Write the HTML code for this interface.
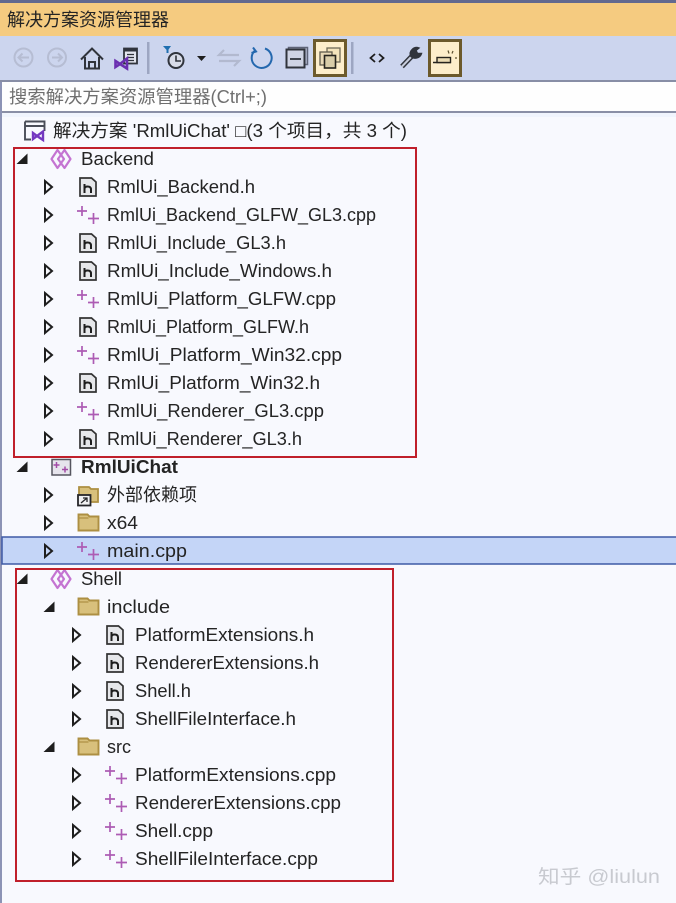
<!DOCTYPE html>
<html lang="zh"><head><meta charset="utf-8">
<style>
html,body{margin:0;padding:0;width:676px;height:903px;overflow:hidden;background:#f8f9fe}
svg{display:block}
text{font-family:"Liberation Sans","Noto Sans CJK SC",sans-serif;font-size:18px;fill:#242424}
</style></head><body>
<svg width="676" height="903" viewBox="0 0 676 903" xmlns="http://www.w3.org/2000/svg">
<defs>
<g id="r"><path d="M0 -6L7 0L0 6Z" fill="#f8f9fe" stroke="#1e1e1e" stroke-width="2"/></g>
<g id="d"><path d="M5.500 -5.500V5H-5.500Z" fill="#1e1e1e"/></g>
<g id="h"><path d="M-8 -9H3.500L8 -5V9H-8Z" fill="#e6e7ea" stroke="#333" stroke-width="1.700"/><path d="M-3.500 -3V6M-3.500 1.500Q-3 -.5 -.5 -.5Q3 -.5 3 2.500V6" fill="none" stroke="#1e1e1e" stroke-width="2"/></g>
<g id="c"><path d="M-11 -4H-1M-6 -9V1M0 3.500H11M5.500 -2V9" fill="none" stroke="#ad5cb4" stroke-width="1.700"/></g>
<g id="f"><path d="M-10 -8H-1L1 -6H10V8H-10Z" fill="#d8c07c" stroke="#ad8f42" stroke-width="1.900"/><path d="M-10 -4.500H0" stroke="#ad8f42" stroke-width="1.200"/></g>
<g id="s"><path d="M-3.500 -9L3 0L-3.500 9L-9.500 0ZM3.500 -9L9.500 0L3.500 9L-3 0Z" fill="none" stroke="#c474d2" stroke-width="2.200" stroke-linejoin="round"/></g>
</defs>

<!-- chrome -->
<rect width="676" height="3" fill="#62698f"/>
<rect y="3" width="676" height="33" fill="#f5cb80"/>
<rect y="36" width="676" height="44" fill="#ccd5ee"/>
<rect y="80" width="676" height="2" fill="#888ea6"/>
<rect y="82" width="676" height="29" fill="#fefefe"/>
<rect y="111" width="676" height="2" fill="#8a8fa6"/>
<rect y="113" width="676" height="4" fill="#f0f4fd"/>
<rect x="0" y="82" width="2" height="821" fill="#8c93b5"/>

<text x="7" y="26" textLength="162" lengthAdjust="spacingAndGlyphs">解决方案资源管理器</text>
<text x="9" y="103" textLength="258" lengthAdjust="spacingAndGlyphs" style="fill:#6f6f6f">搜索解决方案资源管理器(Ctrl+;)</text>

<!-- toolbar icons -->
<g fill="none" stroke="#b6bdd3" stroke-width="2">
<circle cx="23.500" cy="57.500" r="9"/><path d="M29 57.500H19M22.500 53.500L18.500 57.500L22.500 61.500"/>
<circle cx="57" cy="57.500" r="9"/><path d="M52 57.500H62M58 53.500L62 57.500L58 61.500"/>
</g>
<path d="M81 59.500L92 48.500L103 59.500M85 57V68.500H99V57M89 68.500V62H95V68.500" fill="none" stroke="#30343c" stroke-width="2"/>
<rect x="124" y="48.500" width="13" height="15" fill="#e2e5ee" stroke="#30343c" stroke-width="1.800"/>
<rect x="124" y="48.500" width="13" height="3" fill="#30343c"/>
<path d="M127 54.500H134M127 57.500H134M127 60.500H134" stroke="#30343c" stroke-width="1.200"/>
<path d="M115.500 61L120 64L127 58.500V68.500L120 64L115.500 67Z" fill="none" stroke="#6a2fb0" stroke-width="2.600"/>
<rect x="147" y="42" width="2.500" height="32" fill="#9da6c2"/>
<path d="M163 46H171L167.500 51Z" fill="#1f6fb0"/><path d="M166.500 49H168.500V53H166.500Z" fill="#1f6fb0"/>
<circle cx="176" cy="60.500" r="7.500" fill="#d8dce8" stroke="#30343c" stroke-width="2"/>
<path d="M176 55.500V61H181" fill="none" stroke="#30343c" stroke-width="1.600"/>
<path d="M197 56H206L201.500 61Z" fill="#1e1e1e"/>
<path d="M224 50L219 55H239M219 61H239L234 66" fill="none" stroke="#b2b9cf" stroke-width="2.200"/>
<path d="M255 50.500A10 10 0 1 0 265 48.500M253 47.500L256 51.500L251.500 53" fill="none" stroke="#2468ae" stroke-width="2"/>
<rect x="288.500" y="47.500" width="19" height="17" fill="#b6bdd3" stroke="#5e6478" stroke-width="1.500"/>
<rect x="286.500" y="49.500" width="18" height="18" fill="#cfd4e4" stroke="#30343c" stroke-width="2"/>
<path d="M290 59H301" stroke="#30343c" stroke-width="1.800"/>

<rect x="314.500" y="40.500" width="31" height="35" fill="#fdeecb" stroke="#6c5a2c" stroke-width="3"/>
<rect x="327" y="48" width="13" height="14" fill="#f3e3bb" stroke="#6f6a58" stroke-width="1.300"/>
<rect x="320" y="52" width="12" height="13" fill="#e9dab7" stroke="#5f5a4c" stroke-width="1.300"/>
<rect x="324.500" y="55.500" width="11" height="12.500" fill="#d9cda9" stroke="#26241e" stroke-width="1.600"/>
<rect x="351" y="42" width="2.500" height="32" fill="#9da6c2"/>
<path d="M375 54L370.500 58L375 62M379 54L383.500 58L379 62" fill="none" stroke="#1e1e1e" stroke-width="1.800"/>
<path d="M402 66.500L413 55" stroke="#30343c" stroke-width="5"/><path d="M402 66.500L413 55" stroke="#c8cddd" stroke-width="2"/>
<path d="M419 48A6.500 6.500 0 0 0 410.500 56A6.500 6.500 0 0 0 421.500 53.500L417.500 53.500L416 50.500Z" fill="#30343c" stroke="#30343c" stroke-width="1.400"/>
<rect x="429.500" y="40.500" width="31" height="35" fill="#fdeecb" stroke="#6c5a2c" stroke-width="3"/>
<path d="M433 62.500H451" stroke="#26241e" stroke-width="1.500"/>
<rect x="437" y="57.500" width="13.500" height="5" fill="#ebdcb4" stroke="#26241e" stroke-width="1.400"/>
<path d="M448 50.500L449 53.500M453 51L452 53.500M455 58H457" stroke="#5b5030" stroke-width="1.200"/>

<!-- solution -->
<path d="M25 121.500H44.500V131M25 121.500V139.500H31M25 126H44.500" fill="none" stroke="#4a4e58" stroke-width="1.900"/>
<path d="M33 133L37 136L43 131.500V140L37 136L33 139Z" fill="none" stroke="#7438c0" stroke-width="2.400"/>
<text x="53" y="137" textLength="354" lengthAdjust="spacingAndGlyphs">解决方案 'RmlUiChat' □(3 个项目，共 3 个)</text>

<!-- Backend -->
<use href="#d" x="22" y="159"/><use href="#s" x="61" y="159"/>
<text x="81" y="165" textLength="73" lengthAdjust="spacingAndGlyphs">Backend</text>
<use href="#r" x="45" y="187"/><use href="#h" x="88" y="187"/><text x="107" y="193" textLength="148" lengthAdjust="spacingAndGlyphs">RmlUi_Backend.h</text>
<use href="#r" x="45" y="215"/><use href="#c" x="88" y="215"/><text x="107" y="221" textLength="269" lengthAdjust="spacingAndGlyphs">RmlUi_Backend_GLFW_GL3.cpp</text>
<use href="#r" x="45" y="243"/><use href="#h" x="88" y="243"/><text x="107" y="249" textLength="179" lengthAdjust="spacingAndGlyphs">RmlUi_Include_GL3.h</text>
<use href="#r" x="45" y="271"/><use href="#h" x="88" y="271"/><text x="107" y="277" textLength="225" lengthAdjust="spacingAndGlyphs">RmlUi_Include_Windows.h</text>
<use href="#r" x="45" y="299"/><use href="#c" x="88" y="299"/><text x="107" y="305" textLength="229" lengthAdjust="spacingAndGlyphs">RmlUi_Platform_GLFW.cpp</text>
<use href="#r" x="45" y="327"/><use href="#h" x="88" y="327"/><text x="107" y="333" textLength="202" lengthAdjust="spacingAndGlyphs">RmlUi_Platform_GLFW.h</text>
<use href="#r" x="45" y="355"/><use href="#c" x="88" y="355"/><text x="107" y="361" textLength="235" lengthAdjust="spacingAndGlyphs">RmlUi_Platform_Win32.cpp</text>
<use href="#r" x="45" y="383"/><use href="#h" x="88" y="383"/><text x="107" y="389" textLength="213" lengthAdjust="spacingAndGlyphs">RmlUi_Platform_Win32.h</text>
<use href="#r" x="45" y="411"/><use href="#c" x="88" y="411"/><text x="107" y="417" textLength="217" lengthAdjust="spacingAndGlyphs">RmlUi_Renderer_GL3.cpp</text>
<use href="#r" x="45" y="439"/><use href="#h" x="88" y="439"/><text x="107" y="445" textLength="195" lengthAdjust="spacingAndGlyphs">RmlUi_Renderer_GL3.h</text>
<rect x="14" y="148" width="402" height="309" fill="none" stroke="#c01f2b" stroke-width="2"/>

<!-- RmlUiChat -->
<use href="#d" x="22" y="467"/>
<rect x="52" y="459.500" width="18.500" height="15.500" fill="#e6e4ec" stroke="#55555f" stroke-width="1.500"/>
<path d="M53.500 465H59.500M56.500 462V468M62 469.500H68M65 466.500V472.500" fill="none" stroke="#a24ba6" stroke-width="1.500"/>
<text x="81" y="473" textLength="97" lengthAdjust="spacingAndGlyphs" font-weight="bold">RmlUiChat</text>
<use href="#r" x="45" y="495"/>
<path d="M79 497V487H89L91 489H98V502H91" fill="#d8c07c" stroke="#ad8f42" stroke-width="1.800"/>
<rect x="78" y="495" width="12.500" height="10.500" fill="#f0f0f2" stroke="#26262a" stroke-width="1.800"/>
<path d="M81 503L87 498M83 498H87V502" fill="none" stroke="#26262a" stroke-width="1.300"/>
<text x="107" y="501" textLength="90" lengthAdjust="spacingAndGlyphs">外部依赖项</text>
<use href="#r" x="45" y="523"/><use href="#f" x="88.500" y="522.500"/><text x="107" y="529" textLength="31" lengthAdjust="spacingAndGlyphs">x64</text>
<rect x="2" y="537" width="675" height="27" fill="#c4d5f7" stroke="#3e5aa6" stroke-width="1.500"/>
<path d="M45 545L52 551L45 557Z" fill="#c4d5f7" stroke="#1e1e1e" stroke-width="2"/>
<use href="#c" x="88" y="551"/><text x="107" y="557" textLength="80" lengthAdjust="spacingAndGlyphs">main.cpp</text>

<!-- Shell -->
<use href="#d" x="22" y="579"/><use href="#s" x="61" y="579"/>
<text x="81" y="585" textLength="41" lengthAdjust="spacingAndGlyphs">Shell</text>
<use href="#d" x="49" y="607"/><use href="#f" x="88.500" y="606.500"/><text x="107" y="613" textLength="63" lengthAdjust="spacingAndGlyphs">include</text>
<use href="#r" x="73" y="635"/><use href="#h" x="115" y="635"/><text x="135" y="641" textLength="179" lengthAdjust="spacingAndGlyphs">PlatformExtensions.h</text>
<use href="#r" x="73" y="663"/><use href="#h" x="115" y="663"/><text x="135" y="669" textLength="184" lengthAdjust="spacingAndGlyphs">RendererExtensions.h</text>
<use href="#r" x="73" y="691"/><use href="#h" x="115" y="691"/><text x="135" y="697" textLength="56" lengthAdjust="spacingAndGlyphs">Shell.h</text>
<use href="#r" x="73" y="719"/><use href="#h" x="115" y="719"/><text x="135" y="725" textLength="161" lengthAdjust="spacingAndGlyphs">ShellFileInterface.h</text>
<use href="#d" x="49" y="747"/><use href="#f" x="88.500" y="746.500"/><text x="107" y="753" textLength="24" lengthAdjust="spacingAndGlyphs">src</text>
<use href="#r" x="73" y="775"/><use href="#c" x="116" y="775"/><text x="135" y="781" textLength="201" lengthAdjust="spacingAndGlyphs">PlatformExtensions.cpp</text>
<use href="#r" x="73" y="803"/><use href="#c" x="116" y="803"/><text x="135" y="809" textLength="206" lengthAdjust="spacingAndGlyphs">RendererExtensions.cpp</text>
<use href="#r" x="73" y="831"/><use href="#c" x="116" y="831"/><text x="135" y="837" textLength="78" lengthAdjust="spacingAndGlyphs">Shell.cpp</text>
<use href="#r" x="73" y="859"/><use href="#c" x="116" y="859"/><text x="135" y="865" textLength="183" lengthAdjust="spacingAndGlyphs">ShellFileInterface.cpp</text>
<rect x="16" y="569" width="377" height="312" fill="none" stroke="#c01f2b" stroke-width="2"/>

<!-- watermark -->
<text x="538" y="883" textLength="122" lengthAdjust="spacingAndGlyphs" style="fill:#c8cad0;font-size:19px">知乎 @liulun</text>
</svg>
</body></html>
